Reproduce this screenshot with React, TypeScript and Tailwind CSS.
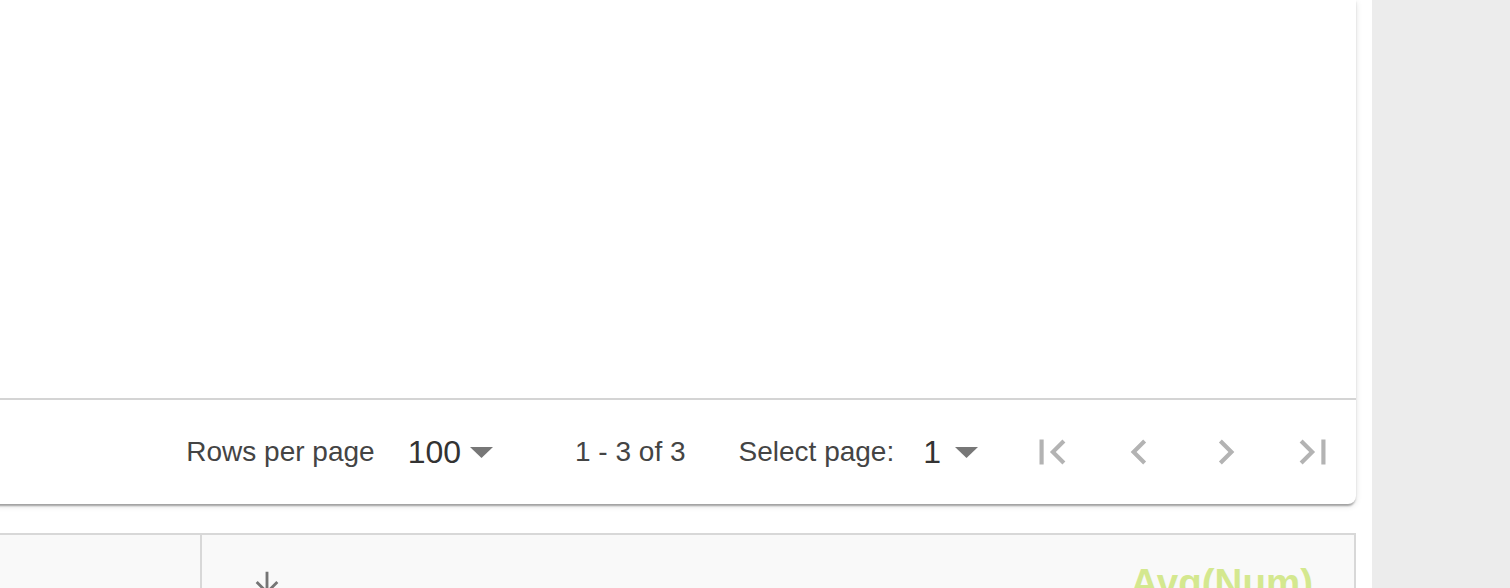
import React from "react";

function Caret() {
  return (
    <svg width="23" height="11" viewBox="0 0 23 11" className="shrink-0">
      <path d="M0 0h23L11.5 11z" fill="#777777" />
    </svg>
  );
}

const icons: Record<string, string> = {
  first: "M18.41 16.59L13.82 12l4.59-4.59L17 6l-6 6 6 6zM6 6h2v12H6z",
  prev: "M15.41 7.41L14 6l-6 6 6 6 1.41-1.41L10.83 12z",
  next: "M10 6L8.59 7.41 13.17 12l-4.58 4.59L10 18l6-6z",
  last: "M5.59 7.41L10.18 12l-4.59 4.59L7 18l6-6-6-6zM16 6h2v12h-2z",
};

function PageButton({ name }: { name: string }) {
  return (
    <button className="flex h-[87px] w-[87px] items-center justify-center" disabled>
      <svg width="50" height="50" viewBox="0 0 24 24">
        <path d={icons[name]} fill="#b3b3b3" />
      </svg>
    </button>
  );
}

function Pagination() {
  return (
    <div className="flex h-[104px] items-center justify-end text-[28px] text-[#444]">
      <span className="mr-[33px]">Rows per page</span>
      <div className="mr-[82px] flex items-center">
        <span className="text-[32px] text-[#333]">100</span>
        <span className="ml-[9px] flex">
          <Caret />
        </span>
      </div>
      <span className="mr-[53px]">1 - 3 of 3</span>
      <span className="mr-[29px]">Select page:</span>
      <div className="mr-[30px] flex items-center">
        <span className="text-[32px] text-[#333]">1</span>
        <span className="ml-[14px] flex">
          <Caret />
        </span>
      </div>
      <div className="flex items-center">
        <PageButton name="first" />
        <PageButton name="prev" />
        <PageButton name="next" />
        <PageButton name="last" />
      </div>
    </div>
  );
}

export default function App() {
  return (
    <div className="flex h-[588px] w-[1510px] overflow-hidden bg-white font-['Liberation_Sans',Arial,sans-serif]">
      <div className="w-[1372px] shrink-0 bg-white">
        <div className="-ml-3 w-[1368px] rounded-b-lg bg-white shadow-[0_4px_2px_-2px_rgba(0,0,0,0.2),0_2px_2px_rgba(0,0,0,0.14),0_2px_6px_rgba(0,0,0,0.12)]">
          <div className="h-[400px] border-b-2 border-[#d4d4d4]" />
          <Pagination />
        </div>

        <div className="-ml-3 mt-[29px] flex h-[90px] w-[1368px] border-2 border-[#d8d8d8] bg-[#f9f9f9]">
          <div className="w-[212px] shrink-0 border-r-2 border-[#d8d8d8]" />
          <div className="flex flex-1 items-start justify-between pt-[29px]">
            <svg width="34" height="34" viewBox="0 0 24 24" className="ml-[48px] mt-[2px]">
              <path
                d="M20 12l-1.41-1.41L13 16.17V4h-2v12.17l-5.58-5.59L4 12l8 8 8-8z"
                fill="#757575"
              />
            </svg>
            <span className="mr-[41px] text-[38.5px] font-bold leading-none text-[#d4e88f]">
              Avg(Num)
            </span>
          </div>
        </div>
      </div>
      <div className="flex-1 bg-[#ececec]" />
    </div>
  );
}
